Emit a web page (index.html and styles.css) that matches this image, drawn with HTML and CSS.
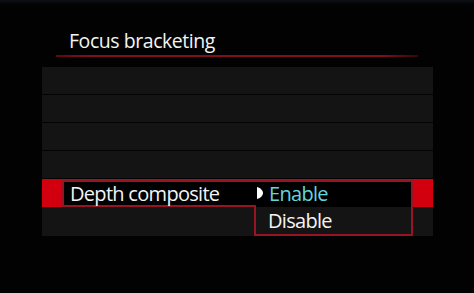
FILE: index.html
```html
<!DOCTYPE html>
<html>
<head>
<meta charset="utf-8">
<link rel="stylesheet" href="styles.css">
</head>
<body>
<div class="screen">
  <div class="title">Focus bracketing</div>
  <div class="rule"></div>
  <div class="panel">
    <div class="row"></div>
    <div class="row"></div>
    <div class="row"></div>
    <div class="row"></div>
    <div class="row sel">
      <div class="cap"></div>
      <div class="box">
        <div class="label">Depth composite</div>
        <div class="opt on"><svg class="marker" width="6" height="12" viewBox="0 0 6 12"><path d="M0 0 C4 1 6 4 6 6 C6 8 4 11 0 12 Z" fill="#ffffff"/></svg>Enable</div>
      </div>
      <div class="cap"></div>
    </div>
    <div class="row last">
      <div class="spacer"></div>
      <div class="drop">Disable</div>
    </div>
  </div>
</div>
</body>
</html>
```
FILE: styles.css
```css
html, body {
  margin: 0;
  padding: 0;
  background: #020202;
}
body {
  width: 474px;
  height: 293px;
  overflow: hidden;
  font-family: "Open Sans", "Noto Sans", sans-serif;
  font-weight: 500;
  color: #f4f4f4;
}
.screen {
  width: 474px;
  height: 293px;
  background: linear-gradient(to bottom, #0b1016 0px, #030304 4px, #020202 8px);
  overflow: hidden;
}
.title {
  margin-left: 69px;
  padding-top: 29px;
  height: 24px;
  font-size: 19.5px;
  line-height: 24px;
  letter-spacing: -0.45px;
  white-space: nowrap;
}
.rule {
  margin: 2px 0 0 56px;
  width: 362px;
  height: 2px;
  background: linear-gradient(to right, #5a0a10 0%, #7e1018 8%, #7e1018 90%, #3a0608 100%);
}
.panel {
  margin: 10px 0 0 42px;
  width: 391px;
  background: #141414;
}
.row {
  height: 27px;
  border-bottom: 1px solid #030303;
  box-sizing: content-box;
}
.row.sel {
  height: 28px;
  border-bottom: none;
  padding-top: 1px;
  box-sizing: border-box;
  background: #d2000e;
  display: flex;
}
.cap {
  width: 20px;
  flex: none;
}
.box {
  flex: 1;
  display: flex;
  border: 2px solid #961424;
  border-bottom: none;
  background: #000;
  height: 27px;
  box-sizing: border-box;
  font-size: 20px;
  letter-spacing: -0.7px;
}
.label {
  width: 192px;
  flex: none;
  box-sizing: border-box;
  padding-left: 6px;
  height: 25px;
  line-height: 23px;
  border-bottom: 2px solid #961424;
  white-space: nowrap;
}
.opt {
  flex: 1;
  display: flex;
  align-items: flex-start;
  line-height: 23px;
  color: #62d6dc;
  white-space: nowrap;
}
.marker {
  margin: 5px 6px 0 1px;
  flex: none;
}
.row.last {
  height: 29px;
  border-bottom: none;
  display: flex;
}
.spacer {
  width: 212px;
  flex: none;
}
.drop {
  width: 159px;
  flex: none;
  box-sizing: border-box;
  height: 29px;
  border: 2px solid #961424;
  border-top: none;
  padding-left: 12px;
  line-height: 27px;
  font-size: 20px;
  letter-spacing: -0.7px;
  background: #141414;
  white-space: nowrap;
}
```
